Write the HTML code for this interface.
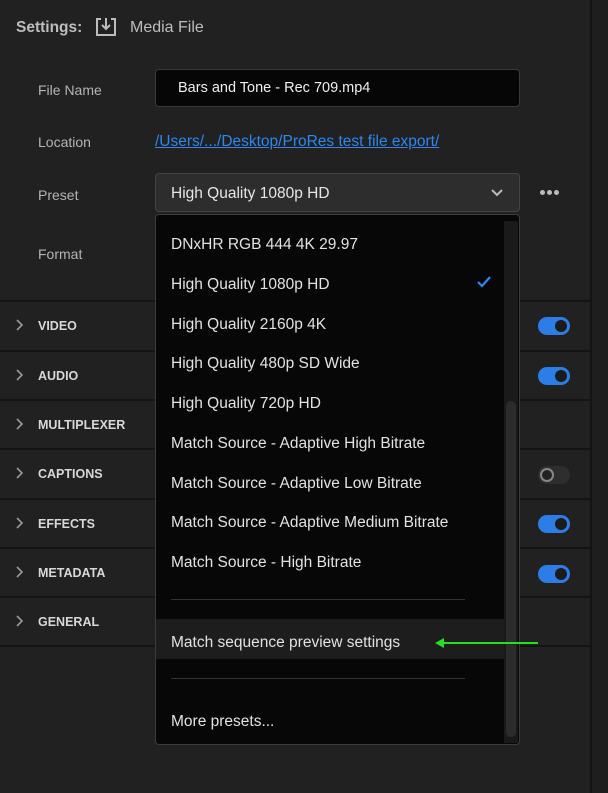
<!DOCTYPE html>
<html><head><meta charset="utf-8"><style>
*{margin:0;padding:0;box-sizing:border-box}
body{width:608px;height:793px;background:#212121;font-family:"Liberation Sans",sans-serif;position:relative;overflow:hidden;color:#ccc}
.a{position:absolute;white-space:nowrap}
.lbl{font-size:14px;color:#b4b4b4}
.row{position:absolute;left:0;width:590px;height:49px;border-top:2px solid #141414}
.row .t{position:absolute;left:38px;top:17px;font-size:12.5px;font-weight:bold;color:#d8d8d8}
.row .c{position:absolute;left:14px;top:16px}
.tg{position:absolute;left:538px;width:32px;height:18px;border-radius:9px;background:#2d7de6}
.tg::after{content:"";position:absolute;right:3px;top:3px;width:12px;height:12px;border-radius:50%;background:#1b1b1b}
.tg.off{background:#2e2e2e}
.tg.off::after{left:2px;top:2px;right:auto;width:10px;height:10px;border:2px solid #888;background:#222}
.it{position:absolute;left:171px;font-size:15.5px;color:#e2e2e2}
</style></head><body>
<div class="a" style="left:590px;top:0;width:2px;height:793px;background:#141414"></div>
<div class="a" style="left:592px;top:0;width:16px;height:793px;background:#1e1e1e"></div>
<div class="a" style="left:16px;top:19px;font-size:15.5px;font-weight:bold;color:#bdbdbd">Settings:</div>
<svg class="a" style="left:95px;top:16px" width="22" height="22" viewBox="0 0 22 22" fill="none" stroke="#bdbdbd" stroke-width="2"><path d="M6 3H2v16h18V3h-4"/><path d="M11 2v11M7 9l4 4 4-4"/></svg>
<div class="a" style="left:130px;top:19px;font-size:16px;color:#bdbdbd">Media File</div>
<div class="a lbl" style="left:38px;top:82px">File Name</div>
<div class="a" style="left:155px;top:69px;width:365px;height:38px;background:#060606;border:1px solid #3a3a3a;border-radius:4px"></div>
<div class="a" style="left:178px;top:80px;font-size:14.5px;color:#efefef">Bars and Tone - Rec 709.mp4</div>
<div class="a lbl" style="left:38px;top:134px">Location</div>
<div class="a" style="left:155px;top:133px;font-size:15.5px;color:#2f86f0;text-decoration:underline">/Users/.../Desktop/ProRes test file export/</div>
<div class="a lbl" style="left:38px;top:187px">Preset</div>
<div class="a" style="left:155px;top:173px;width:365px;height:39px;background:#2d2d2d;border:1px solid #444;border-radius:4px"></div>
<div class="a" style="left:171px;top:185px;font-size:15.5px;color:#e6e6e6">High Quality 1080p HD</div>
<svg class="a" style="left:490px;top:188px" width="14" height="10" viewBox="0 0 14 10" fill="none" stroke="#bbb" stroke-width="2"><path d="M2 2l5 5 5-5"/></svg>
<div class="a" style="left:540px;top:190px;width:20px;height:6px">
<span class="a" style="left:0;top:0;width:5px;height:5px;border-radius:50%;background:#bbb"></span>
<span class="a" style="left:7px;top:0;width:5px;height:5px;border-radius:50%;background:#bbb"></span>
<span class="a" style="left:14px;top:0;width:5px;height:5px;border-radius:50%;background:#bbb"></span></div>
<div class="a lbl" style="left:38px;top:246px">Format</div>

<div class="row" style="top:300px"><svg class="c" width="10" height="14" viewBox="0 0 10 14" fill="none" stroke="#999" stroke-width="1.6"><path d="M3 2l5 5-5 5"/></svg><span class="t">VIDEO</span></div>
<div class="row" style="top:350px"><svg class="c" width="10" height="14" viewBox="0 0 10 14" fill="none" stroke="#999" stroke-width="1.6"><path d="M3 2l5 5-5 5"/></svg><span class="t">AUDIO</span></div>
<div class="row" style="top:399px"><svg class="c" width="10" height="14" viewBox="0 0 10 14" fill="none" stroke="#999" stroke-width="1.6"><path d="M3 2l5 5-5 5"/></svg><span class="t">MULTIPLEXER</span></div>
<div class="row" style="top:448px"><svg class="c" width="10" height="14" viewBox="0 0 10 14" fill="none" stroke="#999" stroke-width="1.6"><path d="M3 2l5 5-5 5"/></svg><span class="t">CAPTIONS</span></div>
<div class="row" style="top:498px"><svg class="c" width="10" height="14" viewBox="0 0 10 14" fill="none" stroke="#999" stroke-width="1.6"><path d="M3 2l5 5-5 5"/></svg><span class="t">EFFECTS</span></div>
<div class="row" style="top:547px"><svg class="c" width="10" height="14" viewBox="0 0 10 14" fill="none" stroke="#999" stroke-width="1.6"><path d="M3 2l5 5-5 5"/></svg><span class="t">METADATA</span></div>
<div class="row" style="top:596px;border-bottom:2px solid #141414;height:51px"><svg class="c" width="10" height="14" viewBox="0 0 10 14" fill="none" stroke="#999" stroke-width="1.6"><path d="M3 2l5 5-5 5"/></svg><span class="t">GENERAL</span></div>
<div class="tg" style="top:317px"></div>
<div class="tg" style="top:367px"></div>
<div class="tg off" style="top:466px"></div>
<div class="tg" style="top:515px"></div>
<div class="tg" style="top:565px"></div>

<div class="a" style="left:155px;top:214px;width:365px;height:531px;background:#070707;border:1px solid #3c3c3c;border-radius:4px;overflow:hidden">
<div class="a" style="left:348px;top:6px;width:14px;height:522px;background:#1a1a1a"></div>
<div class="a" style="left:350px;top:186px;width:10px;height:336px;background:#2c2c2c;border-radius:5px"></div>
<div class="a" style="left:0;top:404px;width:348px;height:40px;background:#1d1d1d"></div>
<div class="a" style="left:15px;top:384px;width:294px;height:1px;background:#333"></div>
<div class="a" style="left:15px;top:463px;width:294px;height:1px;background:#333"></div>
<svg class="a" style="left:320px;top:60px" width="16" height="14" viewBox="0 0 16 14" fill="none" stroke="#2f86f0" stroke-width="2.2"><path d="M2 7l4 4 8-9"/></svg>
</div>
<div class="it" style="top:236px">DNxHR RGB 444 4K 29.97</div>
<div class="it" style="top:276px">High Quality 1080p HD</div>
<div class="it" style="top:316px">High Quality 2160p 4K</div>
<div class="it" style="top:355px">High Quality 480p SD Wide</div>
<div class="it" style="top:395px">High Quality 720p HD</div>
<div class="it" style="top:435px">Match Source - Adaptive High Bitrate</div>
<div class="it" style="top:475px">Match Source - Adaptive Low Bitrate</div>
<div class="it" style="top:514px">Match Source - Adaptive Medium Bitrate</div>
<div class="it" style="top:554px">Match Source - High Bitrate</div>
<div class="it" style="top:634px">Match sequence preview settings</div>
<div class="it" style="top:713px">More presets...</div>
<svg class="a" style="left:434px;top:637px" width="106" height="12" viewBox="0 0 106 12"><path d="M8 6H104" stroke="#22e022" stroke-width="2"/><path d="M1 6l9-5v10z" fill="#22e022"/></svg>
</body></html>
